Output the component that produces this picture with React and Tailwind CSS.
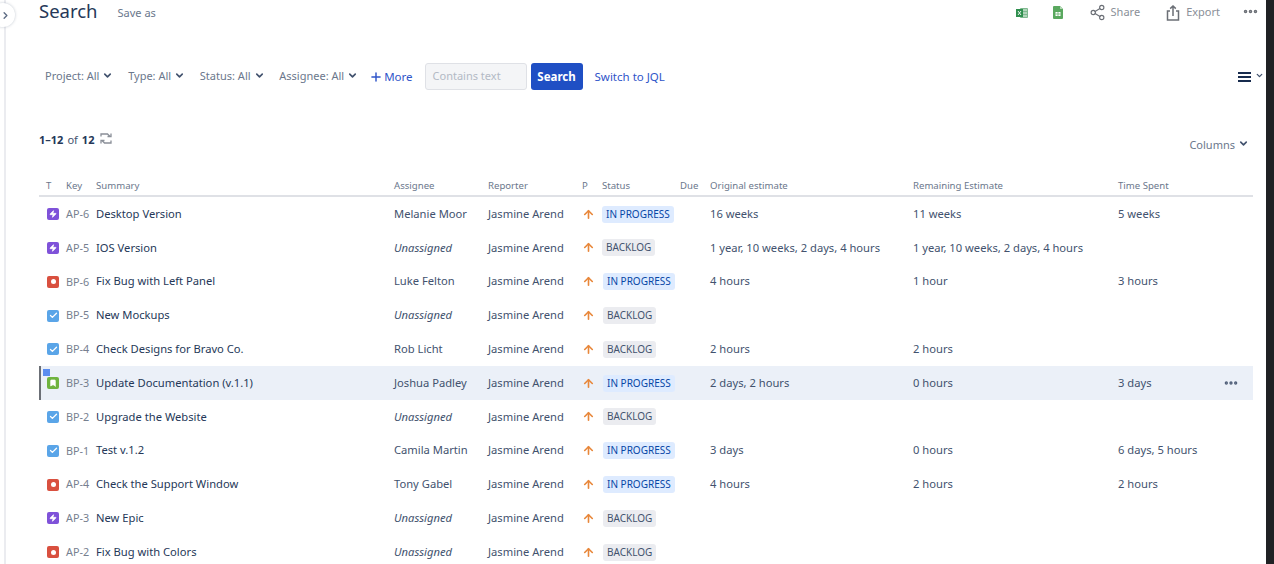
import { ChevronDown, ChevronRight, Plus, Share2, MoreHorizontal, ArrowUp, Check, Bookmark, Zap } from "lucide-react";

const issues = [
  { type: "epic", id: "AP-6", summary: "Desktop Version", assignee: "Melanie Moor", status: "IN PROGRESS", original: "16 weeks", remaining: "11 weeks", spent: "5 weeks" },
  { type: "epic", id: "AP-5", summary: "IOS Version", status: "BACKLOG", original: "1 year, 10 weeks, 2 days, 4 hours", remaining: "1 year, 10 weeks, 2 days, 4 hours" },
  { type: "bug", id: "BP-6", summary: "Fix Bug with Left Panel", assignee: "Luke Felton", status: "IN PROGRESS", original: "4 hours", remaining: "1 hour", spent: "3 hours" },
  { type: "task", id: "BP-5", summary: "New Mockups", status: "BACKLOG" },
  { type: "task", id: "BP-4", summary: "Check Designs for Bravo Co.", assignee: "Rob Licht", status: "BACKLOG", original: "2 hours", remaining: "2 hours" },
  { type: "story", id: "BP-3", summary: "Update Documentation (v.1.1)", assignee: "Joshua Padley", status: "IN PROGRESS", original: "2 days, 2 hours", remaining: "0 hours", spent: "3 days", active: true },
  { type: "task", id: "BP-2", summary: "Upgrade the Website", status: "BACKLOG" },
  { type: "task", id: "BP-1", summary: "Test v.1.2", assignee: "Camila Martin", status: "IN PROGRESS", original: "3 days", remaining: "0 hours", spent: "6 days, 5 hours" },
  { type: "bug", id: "AP-4", summary: "Check the Support Window", assignee: "Tony Gabel", status: "IN PROGRESS", original: "4 hours", remaining: "2 hours", spent: "2 hours" },
  { type: "epic", id: "AP-3", summary: "New Epic", status: "BACKLOG" },
  { type: "bug", id: "AP-2", summary: "Fix Bug with Colors", status: "BACKLOG" },
];

const grid = "grid grid-cols-[27px_30px_298px_94px_94px_20px_78px_30px_203px_205px_105px_1fr] items-center";

const TypeIcon = ({ type }) => {
  if (type === "epic") {
    return (
      <span className="flex w-[12px] h-[12px] items-center justify-center rounded-[2px] bg-[#7f52d9]">
        <Zap size={8} className="text-white fill-white" />
      </span>
    );
  }
  if (type === "bug") {
    return (
      <span className="flex w-[12px] h-[12px] items-center justify-center rounded-[2px] bg-[#d9503f]">
        <span className="w-[5px] h-[5px] rounded-full bg-white" />
      </span>
    );
  }
  if (type === "story") {
    return (
      <span className="flex w-[12px] h-[12px] items-center justify-center rounded-[2px] bg-[#6fb33f]">
        <Bookmark size={8} className="text-white fill-white" />
      </span>
    );
  }
  return (
    <span className="flex w-[12px] h-[12px] items-center justify-center rounded-[2px] bg-[#5aa5e8]">
      <Check size={9} strokeWidth={3.5} className="text-white" />
    </span>
  );
};

const Status = ({ value, nudge }) => (
  <span
    className={
      (value === "BACKLOG"
        ? "inline-block rounded-[3px] bg-[#ebecf0] px-[4px] text-[10px] leading-[17px] text-[#42526e]"
        : "inline-block rounded-[3px] bg-[#deebff] px-[4px] text-[10px] leading-[17px] text-[#0747a6]") +
      (nudge ? " ml-[1px]" : "")
    }
  >
    {value}
  </span>
);

const Filter = ({ label }) => (
  <button className="flex items-center gap-[3px] text-[#6b778c]">
    {label}
    <ChevronDown size={11} strokeWidth={3.5} className="mb-[3px] text-[#42526e]" />
  </button>
);

const ExcelIcon = () => (
  <svg width="12" height="12" viewBox="0 0 12 12">
    <rect x="4" y="1" width="8" height="10" rx="1" fill="#7fb98f" />
    <path d="M7 3h4M7 6h4M7 9h4" stroke="#fff" strokeWidth="0.8" />
    <rect x="0" y="2" width="7" height="8" fill="#2f8f4e" />
    <path d="M2 4l3 4M5 4l-3 4" stroke="#fff" strokeWidth="0.9" />
  </svg>
);

const SheetIcon = () => (
  <svg width="10" height="13" viewBox="0 0 10 13">
    <path d="M0 1a1 1 0 0 1 1-1h6l3 3v9a1 1 0 0 1-1 1H1a1 1 0 0 1-1-1z" fill="#5aa85f" />
    <path d="M7 0l3 3H7z" fill="#b5d9b7" />
    <rect x="2.5" y="6" width="5" height="4" fill="#fff" />
    <path d="M5 6v4M2.5 8h5" stroke="#5aa85f" strokeWidth="0.7" />
  </svg>
);

const ExportIcon = () => (
  <svg width="14" height="16" viewBox="0 0 14 16" fill="none" stroke="#6b6f76" strokeWidth="1.5">
    <path d="M4 6H1.5v9h11V6H10" />
    <path d="M7 11V1M4.2 3.6L7 1l2.8 2.6" />
  </svg>
);

const ListIcon = () => (
  <svg width="13" height="10" viewBox="0 0 13 10" fill="none" stroke="#172b4d" strokeWidth="2">
    <path d="M0 1h13M0 5h13M0 9h13" />
  </svg>
);

const RefreshIcon = () => (
  <svg width="12" height="11" viewBox="0 0 12 11" fill="none" stroke="#8a8f98" strokeWidth="1.3">
    <path d="M1 3.5V1h6.5L10 3.5" />
    <path d="M7.5 3.5H11V0.5" />
    <path d="M11 7.5V10H4.5L2 7.5" />
    <path d="M4.5 7.5H1v3" />
  </svg>
);

export default function App() {
  return (
    <div className="flex h-[564px] w-full overflow-hidden bg-white font-['Noto_Sans',sans-serif] text-[11.2px] text-[#42526e]">
      <div className="relative w-[6px] shrink-0 border-r-2 border-[#ebecf0]">
        <span className="absolute left-[-9px] top-[3px] flex h-[24px] w-[24px] items-center justify-center rounded-full bg-white shadow-[0_0_3px_rgba(9,30,66,0.25)]">
          <ChevronRight size={11} strokeWidth={3} className="ml-[5px] text-[#5e6c84]" />
        </span>
      </div>

      <main className="flex min-w-0 flex-1 flex-col pl-[33px] pr-[13px]">
        <header className="flex h-[21px] items-center justify-between">
          <div className="flex items-center">
            <h1 className="text-[18.5px] leading-[20px] text-[#253858]">Search</h1>
            <span className="ml-[20px] mt-[6px] text-[11px] text-[#6b778c]">Save as</span>
          </div>
          <div className="mr-[-6px] mt-[4px] flex items-center text-[11px] text-[#8a8f98]">
            <ExcelIcon />
            <span className="ml-[25px]"><SheetIcon /></span>
            <Share2 size={17} strokeWidth={1.6} className="ml-[26px] text-[#6b6f76]" />
            <span className="ml-[5px]">Share</span>
            <span className="ml-[26px]"><ExportIcon /></span>
            <span className="ml-[6px]">Export</span>
            <MoreHorizontal size={17} strokeWidth={3} className="ml-[22px] mb-[2px] text-[#6b6f76]" />
          </div>
        </header>

        <div className="mt-[42px] flex h-[28px] items-center pl-[6px]">
          <div className="flex items-center gap-[14.7px] text-[11px]">
            <Filter label="Project: All" />
            <Filter label="Type: All" />
            <Filter label="Status: All" />
            <Filter label="Assignee: All" />
          </div>
          <button className="ml-[11px] flex items-center text-[11.5px] text-[#2f55c9]">
            <Plus size={14} strokeWidth={2.5} className="mr-[1px]" />
            More
          </button>
          <div className="ml-[12px] flex h-[27px] w-[102px] items-center rounded-[3px] border border-[#dfe1e6] bg-[#f4f5f7] px-[7px] text-[11px] text-[#b3bac5]">
            Contains text
          </div>
          <button className="ml-[4px] h-[27px] w-[52px] rounded-[3px] bg-[#1f4fc4] text-[11.5px] font-bold text-white">Search</button>
          <button className="ml-[12px] text-[11.5px] text-[#2f55c9]">Switch to JQL</button>
          <div className="ml-auto mr-[-11px] flex items-center gap-[4px]">
            <ListIcon />
            <span className="mb-[3px]"><ChevronDown size={9} strokeWidth={3.5} className="text-[#42526e]" /></span>
          </div>
        </div>

        <div className="mt-[42px] flex h-[20px] items-center text-[11px] text-[#253858]">
          <b>1–12</b>
          <span className="mx-[4px] text-[#42526e]">of</span>
          <b>12</b>
          <span className="mb-[4px] ml-[6px]"><RefreshIcon /></span>
        </div>

        <div className="mt-[-12px] flex justify-end pr-[4px]">
          <button className="flex items-center gap-[3px] text-[11px] text-[#6b778c]">
            Columns
            <ChevronDown size={11} strokeWidth={3.5} className="mb-[2px] text-[#42526e]" />
          </button>
        </div>

        <div className={`${grid} mt-[24.3px] h-[20px] shrink-0 border-b-2 border-[#dfe1e6] text-[9.6px] text-[#6b778c]`}>
          <span className="pl-[7px]">T</span>
          <span>Key</span>
          <span>Summary</span>
          <span>Assignee</span>
          <span>Reporter</span>
          <span>P</span>
          <span>Status</span>
          <span>Due</span>
          <span>Original estimate</span>
          <span>Remaining Estimate</span>
          <span>Time Spent</span>
          <span />
        </div>

        {issues.map((issue, i) => (
          <div
            key={issue.id}
            className={`${grid} relative h-[33.8px] shrink-0 ${issue.active ? "bg-[#ebf0f8]" : ""}`}
          >
            {issue.active && (
              <>
                <span className="absolute left-0 top-0 h-full w-[2px] bg-[#6b6f76]" />
                <span className="absolute left-[4px] top-[3px] z-10 h-[7px] w-[7px] bg-[#5b8def]" />
              </>
            )}
            <span className="pl-[8px]"><TypeIcon type={issue.type} /></span>
            <span className="text-[10.8px] text-[#76808f]">{issue.id}</span>
            <span className="text-[#253858]">{issue.summary}</span>
            {issue.assignee ? <span>{issue.assignee}</span> : <i>Unassigned</i>}
            <span>Jasmine Arend</span>
            <ArrowUp size={13} strokeWidth={3} className="text-[#e8873a]" />
            <span><Status value={issue.status} nudge={i > 1} /></span>
            <span />
            <span>{issue.original}</span>
            <span>{issue.remaining}</span>
            <span>{issue.spent}</span>
            {issue.active ? <MoreHorizontal size={16} strokeWidth={3} className="text-[#505f79]" /> : <span />}
          </div>
        ))}
      </main>

      <div className="w-[8px] shrink-0 bg-[#202124]" />
    </div>
  );
}
